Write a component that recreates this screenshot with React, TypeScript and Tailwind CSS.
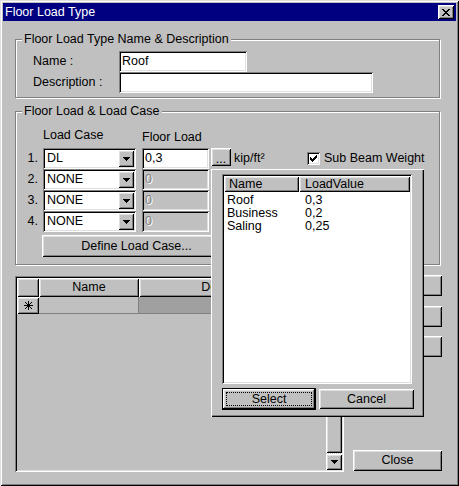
const raised =
  'shadow-[inset_1px_1px_0_#fff,inset_-1px_-1px_0_#000,inset_2px_2px_0_#dfdfdf,inset_-2px_-2px_0_#808080]'
const sunken =
  'shadow-[inset_1px_1px_0_#808080,inset_-1px_-1px_0_#fff,inset_2px_2px_0_#000,inset_-2px_-2px_0_#dfdfdf]'
const etched = 'border border-[#808080] shadow-[inset_1px_1px_0_#fff,1px_1px_0_#fff]'
const frame =
  'shadow-[inset_1px_1px_0_#dfdfdf,inset_-1px_-1px_0_#000,inset_2px_2px_0_#fff,inset_-2px_-2px_0_#808080]'
const defaultBtn =
  'shadow-[inset_0_0_0_1px_#000,inset_-2px_-2px_0_#000,inset_2px_2px_0_#fff,inset_-3px_-3px_0_#808080,inset_3px_3px_0_#dfdfdf]'

function Arrow() {
  return (
    <svg width="7" height="4" viewBox="0 0 7 4" shapeRendering="crispEdges">
      <path d="M0 0h7v1H0zM1 1h5v1H1zM2 2h3v1H2zM3 3h1v1H3z" fill="#000" />
    </svg>
  )
}

function CloseX() {
  return (
    <svg width="8" height="7" viewBox="0 0 8 7" shapeRendering="crispEdges">
      <path
        d="M0 0h2v1H0zM6 0h2v1H6zM1 1h2v1H1zM5 1h2v1H5zM2 2h4v1H2zM3 3h2v1H3zM2 4h4v1H2zM1 5h2v1H1zM5 5h2v1H5zM0 6h2v1H0zM6 6h2v1H6z"
        fill="#000"
      />
    </svg>
  )
}

function Check() {
  return (
    <svg width="7" height="7" viewBox="0 0 7 7" shapeRendering="crispEdges">
      <path d="M6 0h1v1H6zM5 1h2v1H5zM0 2h1v1H0zM4 2h3v1H4zM0 3h2v1H0zM3 3h3v1H3zM0 4h5v1H0zM1 5h3v1H1zM2 6h1v1H2z" fill="#000" />
    </svg>
  )
}

function Star() {
  return (
    <svg width="9" height="9" viewBox="0 0 9 9" shapeRendering="crispEdges">
      <path d="M4.5 0v9M0 4.5h9M1 1l7 7M8 1l-7 7" stroke="#000" strokeWidth="1" fill="none" />
    </svg>
  )
}

function Legend({ children }: { children: React.ReactNode }) {
  return <span className="-mt-[8px] ml-[6px] block h-[15px] w-fit bg-[#c0c0c0] px-[2px]">{children}</span>
}

function Field({ value, width, disabled }: { value: string; width: string; disabled?: boolean }) {
  return (
    <div className={`flex h-[21px] items-center p-[2px] ${width} ${disabled ? 'bg-[#c0c0c0]' : 'bg-white'} ${sunken}`}>
      <span
        className={`pl-[1px] ${disabled ? 'text-[#808080] [text-shadow:1px_1px_0_#fff]' : ''}`}
      >
        {value}
      </span>
    </div>
  )
}

function Combo({ value }: { value: string }) {
  return (
    <div className={`flex h-[21px] w-[93px] bg-white p-[2px] ${sunken}`}>
      <span className="flex-1 pl-[2px] leading-[17px]">{value}</span>
      <span className={`flex w-[16px] items-center justify-center bg-[#c0c0c0] ${raised}`}>
        <Arrow />
      </span>
    </div>
  )
}

function Btn({ label, className }: { label: string; className: string }) {
  return (
    <button className={`flex items-center justify-center bg-[#c0c0c0] ${raised} ${className}`}>{label}</button>
  )
}

const cases = [
  { n: '1.', c: 'DL', v: '0,3' },
  { n: '2.', c: 'NONE', v: '0' },
  { n: '3.', c: 'NONE', v: '0' },
  { n: '4.', c: 'NONE', v: '0' },
]

const loads = [
  { name: 'Roof', value: '0,3' },
  { name: 'Business', value: '0,2' },
  { name: 'Saling', value: '0,25' },
]

export default function App() {
  return (
    <div className="font-['Liberation_Sans',Arial,sans-serif] text-[12.5px] leading-[15px] text-black">
      <div className={`relative flex h-[486px] w-[459px] flex-col bg-[#c0c0c0] p-[3px] ${frame}`}>
        {/* title bar */}
        <div className="flex h-[18px] items-center bg-[#000080] px-[2px]">
          <span className="flex-1 text-white">Floor Load Type</span>
          <button className={`flex h-[14px] w-[16px] items-center justify-center bg-[#c0c0c0] ${raised}`}>
            <CloseX />
          </button>
        </div>

        {/* name & description */}
        <div className={`ml-[12px] mt-[18px] h-[59px] w-[425px] ${etched}`}>
          <Legend>Floor Load Type Name &amp; Description</Legend>
          <div className="mt-[4px] flex flex-col">
            <div className="flex h-[21px] items-center">
              <span className="w-[103px] pl-[17px]">Name :</span>
              <Field value="Roof" width="w-[128px]" />
            </div>
            <div className="flex h-[21px] items-center">
              <span className="w-[103px] pl-[17px]">Description :</span>
              <Field value="" width="w-[254px]" />
            </div>
          </div>
        </div>

        {/* load & load case */}
        <div className={`ml-[12px] mt-[13px] h-[154px] w-[425px] ${etched}`}>
          <Legend>Floor Load &amp; Load Case</Legend>
          <div className="mt-[9px] flex h-[15px] items-start pl-[27px]">
            <span className="w-[99px]">Load Case</span>
            <span className="mt-[2px]">Floor Load</span>
          </div>
          <div className="mt-[5px] flex flex-col">
            {cases.map((r, i) => (
              <div key={r.n} className="flex h-[21px] items-center">
                <span className="w-[22px] text-right">{r.n}</span>
                <span className="ml-[5px]">
                  <Combo value={r.c} />
                </span>
                <span className="ml-[6px]">
                  <Field value={r.v} width="w-[67px]" disabled={i > 0} />
                </span>
                {i === 0 && (
                  <>
                    <button
                      className={`ml-[2px] flex h-[18px] w-[20px] items-end justify-center self-start bg-[#c0c0c0] pb-[2px] leading-[10px] ${raised}`}
                    >
                      ...
                    </button>
                    <span className="ml-[3px] w-[73px]">kip/ft²</span>
                    <span className={`flex h-[13px] w-[13px] items-center justify-center bg-white ${sunken}`}>
                      <Check />
                    </span>
                    <span className="ml-[4px]">Sub Beam Weight</span>
                  </>
                )}
              </div>
            ))}
          </div>
          <Btn label="Define Load Case..." className="ml-[26px] mt-[3px] h-[22px] w-[189px]" />
        </div>

        {/* grid and buttons */}
        <div className="ml-[12px] mt-[10px] flex">
          <div className={`mt-[1px] flex h-[196px] w-[329px] bg-[#c0c0c0] p-[2px] ${sunken}`}>
            <div className="flex flex-1 flex-col overflow-hidden">
              <div className="flex h-[19px]">
                <div className={`w-[22px] ${raised}`} />
                <div className={`flex w-[100px] items-center justify-center ${raised}`}>Name</div>
                <div className={`flex flex-1 items-center justify-center ${raised}`}>Description</div>
              </div>
              <div className="flex h-[17px]">
                <div className={`flex w-[22px] items-center justify-center ${raised}`}>
                  <Star />
                </div>
                <div className="w-[100px] border-b border-r border-[#808080]" />
                <div className="flex-1 border-b border-r border-[#808080] bg-[#a0a0a0]" />
              </div>
            </div>
            <div className="flex w-[16px] flex-col bg-[repeating-conic-gradient(#c0c0c0_0_25%,#fff_0_50%)] bg-[length:2px_2px]">
              <div className={`flex h-[16px] items-center justify-center bg-[#c0c0c0] ${raised}`}>
                <span className="rotate-180">
                  <Arrow />
                </span>
              </div>
              <div className={`mb-[1px] flex-1 bg-[#c0c0c0] ${raised}`} />
              <div className={`flex h-[16px] items-center justify-center bg-[#c0c0c0] ${raised}`}>
                <Arrow />
              </div>
            </div>
          </div>
          <div className="ml-[9px] flex h-[196px] w-[89px] flex-col">
            <Btn label="Add" className="h-[21px] w-full" />
            <Btn label="Modify" className="mt-[10px] h-[21px] w-full" />
            <Btn label="Delete" className="mt-[9px] h-[21px] w-full" />
            <Btn label="Close" className="mt-auto h-[21px] w-full" />
          </div>
        </div>

        {/* floor load list popup */}
        <div
          className={`absolute left-[211px] top-[169px] flex h-[248px] w-[213px] flex-col bg-[#c0c0c0] pl-[11px] pt-[5px] shadow-[inset_1px_1px_0_#fff,inset_-1px_-1px_0_#000,inset_-2px_-2px_0_#808080]`}
        >
          <div className={`flex h-[210px] w-[190px] flex-col bg-white p-[2px] ${sunken}`}>
            <div className="flex h-[16px] bg-[#c0c0c0]">
              <div className={`flex w-[75px] items-center pl-[5px] ${raised}`}>Name</div>
              <div className={`flex w-[111px] items-center pl-[6px] ${raised}`}>LoadValue</div>
            </div>
            <div className="flex flex-col pt-[1px]">
              {loads.map((l) => (
                <div key={l.name} className="flex h-[13px] pl-[3px] leading-[14px]">
                  <span className="w-[78px]">{l.name}</span>
                  <span>{l.value}</span>
                </div>
              ))}
            </div>
          </div>
          <div className="mt-[4px] flex items-center gap-[3px]">
            <button className={`flex h-[22px] w-[94px] bg-[#c0c0c0] p-[4px] ${defaultBtn}`}>
              <span className="flex flex-1 items-center justify-center border border-dotted border-black">Select</span>
            </button>
            <Btn label="Cancel" className="h-[20px] w-[95px]" />
          </div>
        </div>
      </div>
    </div>
  )
}
